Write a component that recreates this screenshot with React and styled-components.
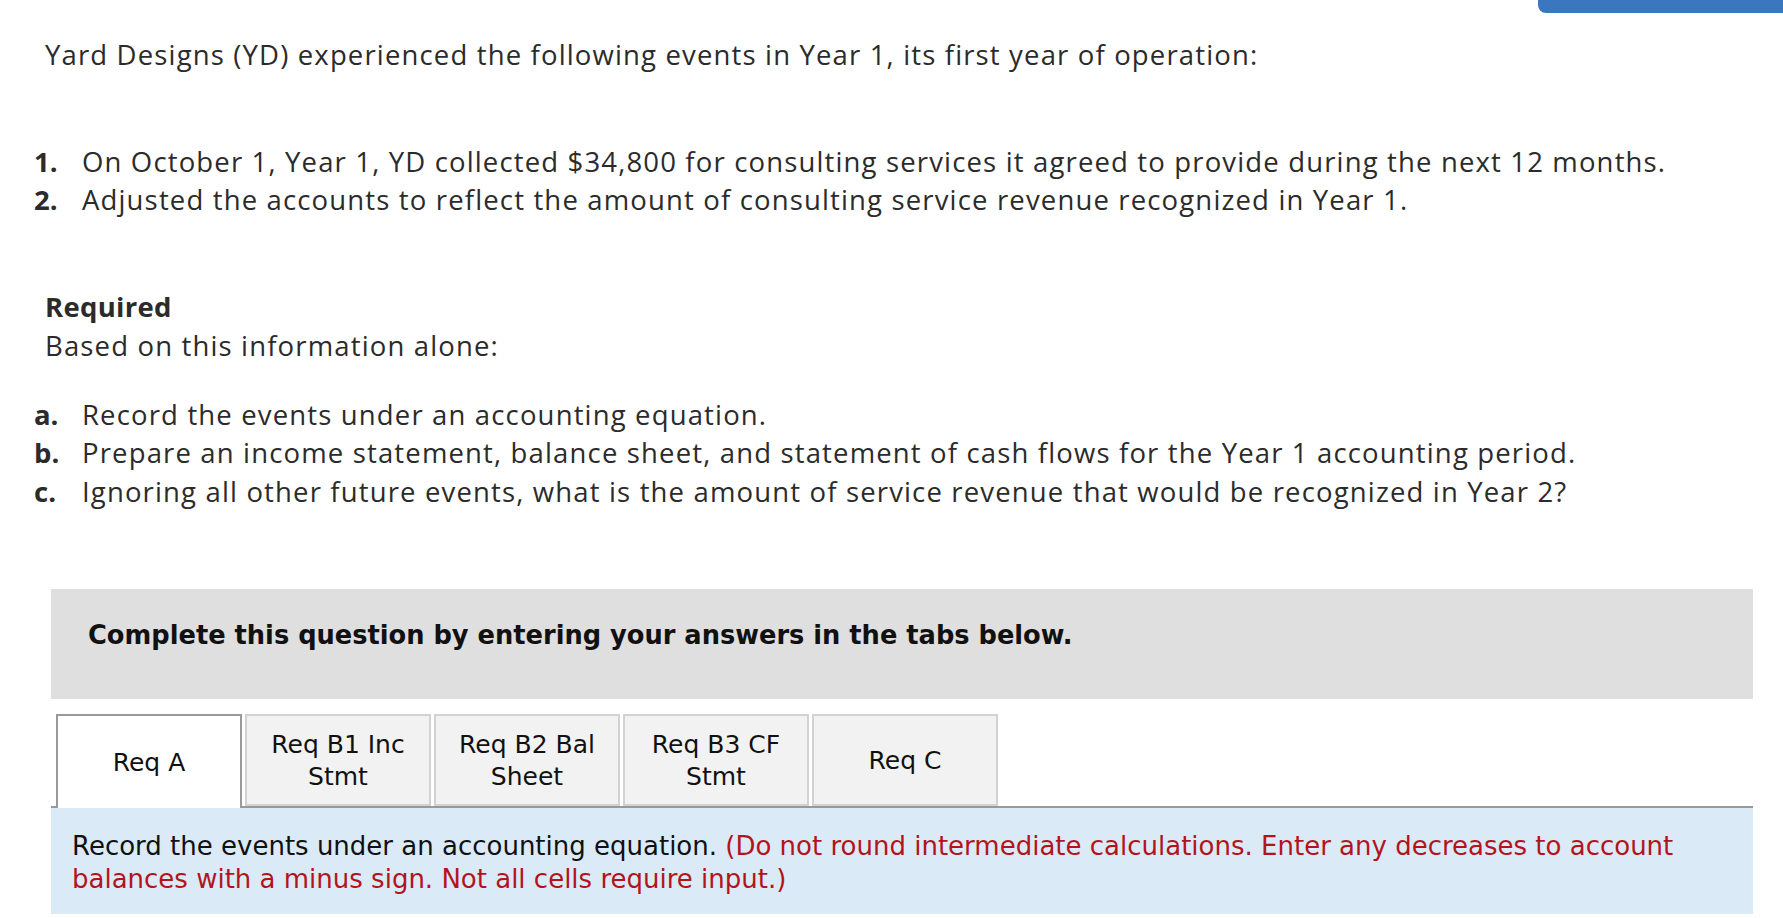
import styled, { createGlobalStyle } from "styled-components";

const GlobalStyle = createGlobalStyle`
  body {
    margin: 0;
    background: #fff;
  }
`;

const steps = [
  { mark: "1.", text: "On October 1, Year 1, YD collected $34,800 for consulting services it agreed to provide during the next 12 months." },
  { mark: "2.", text: "Adjusted the accounts to reflect the amount of consulting service revenue recognized in Year 1." },
];

const reqs = [
  { mark: "a.", text: "Record the events under an accounting equation." },
  { mark: "b.", text: "Prepare an income statement, balance sheet, and statement of cash flows for the Year 1 accounting period." },
  { mark: "c.", text: "Ignoring all other future events, what is the amount of service revenue that would be recognized in Year 2?" },
];

const tabs = [
  { label: ["Req A"], active: true },
  { label: ["Req B1 Inc", "Stmt"] },
  { label: ["Req B2 Bal", "Sheet"] },
  { label: ["Req B3 CF", "Stmt"] },
  { label: ["Req C"] },
];

const App = () => {
  return (
    <Page>
      <GlobalStyle />
      <TopBar>
        <CornerButton />
      </TopBar>
      <Question>
        <Title>Yard Designs (YD) experienced the following events in Year 1, its first year of operation:</Title>
        <List $top={68}>
          {steps.map((s) => (
            <Item key={s.mark}>
              <Mark>{s.mark}</Mark>
              <span>{s.text}</span>
            </Item>
          ))}
        </List>
        <Required>Required</Required>
        <Title>Based on this information alone:</Title>
        <List $top={30}>
          {reqs.map((s) => (
            <Item key={s.mark}>
              <Mark>{s.mark}</Mark>
              <span>{s.text}</span>
            </Item>
          ))}
        </List>
      </Question>
      <Workspace>
        <Instructions>Complete this question by entering your answers in the tabs below.</Instructions>
        <TabRow>
          {tabs.map((t) => (
            <Tab key={t.label.join(" ")} $active={t.active}>
              {t.label.map((l) => (
                <span key={l}>{l}</span>
              ))}
            </Tab>
          ))}
        </TabRow>
        <Panel>
          Record the events under an accounting equation.{" "}
          <Hint>
            (Do not round intermediate calculations. Enter any decreases to account
            <br />
            balances with a minus sign. Not all cells require input.)
          </Hint>
        </Panel>
      </Workspace>
    </Page>
  );
};

export default App;

const Page = styled.div`
  width: 1783px;
  min-height: 918px;
  font-family: "Open Sans", "Liberation Sans", sans-serif;
  color: #2b2b2b;
`;

const TopBar = styled.div`
  display: flex;
  justify-content: flex-end;
  height: 13px;
`;

const CornerButton = styled.div`
  width: 245px;
  height: 13px;
  background: #3b77bf;
  border-bottom-left-radius: 8px;
`;

const Question = styled.div`
  padding: 23px 0 0 45px;
  font-size: 27.5px;
  letter-spacing: 1.15px;
  line-height: 38.7px;
`;

const Title = styled.div``;

const List = styled.div`
  margin: ${(p) => p.$top}px 0 0 -11px;
  display: flex;
  flex-direction: column;
`;

const Item = styled.div`
  display: grid;
  grid-template-columns: 48px 1fr;
  white-space: nowrap;
`;

const Mark = styled.span`
  font-weight: 700;
  letter-spacing: 0;
`;

const Required = styled.div`
  margin-top: 68px;
  font-weight: 700;
  letter-spacing: 0.3px;
`;

const Workspace = styled.div`
  margin: 77px 0 0 51px;
  width: 1702px;
  font-family: "DejaVu Sans", Verdana, sans-serif;
  font-size: 26px;
`;

const Instructions = styled.div`
  height: 110px;
  box-sizing: border-box;
  padding: 30px 0 0 37px;
  background: #dfdfdf;
  color: #111;
  font-size: 25.7px;
  font-weight: 700;
  line-height: 33px;
`;

const TabRow = styled.div`
  display: flex;
  align-items: flex-end;
  gap: 3px;
  margin-top: 15px;
  padding-left: 5px;
  border-bottom: 2px solid #999;
`;

const Tab = styled.div`
  width: 186px;
  height: ${(p) => (p.$active ? "94px" : "92px")};
  margin-bottom: ${(p) => (p.$active ? "-2px" : "0")};
  box-sizing: border-box;
  display: flex;
  flex-direction: column;
  align-items: center;
  justify-content: center;
  border: 2px solid ${(p) => (p.$active ? "#999" : "#d2d2d2")};
  border-bottom: ${(p) => (p.$active ? "none" : "2px solid #d2d2d2")};
  background: ${(p) => (p.$active ? "#fff" : "#f2f2f2")};
  color: #111;
  font-size: 25px;
  line-height: 32px;
  padding-top: 2px;
`;

const Panel = styled.div`
  height: 106px;
  box-sizing: border-box;
  padding: 22px 0 0 21px;
  background: #dbeaf7;
  color: #111;
  line-height: 33px;
`;

const Hint = styled.span`
  color: #b3141c;
`;
